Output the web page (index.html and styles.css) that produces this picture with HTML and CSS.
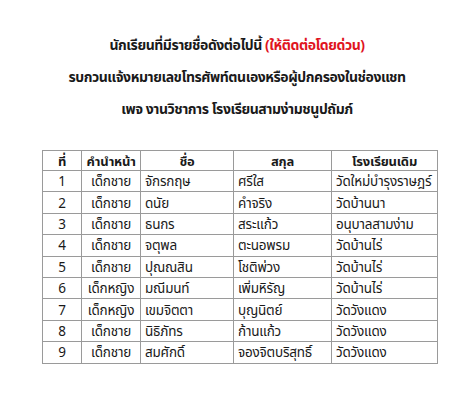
FILE: index.html
```html
<!DOCTYPE html>
<html lang="th">
<head>
<meta charset="utf-8">
<link rel="stylesheet" href="styles.css">
</head>
<body>
<div class="page">
  <div class="heading">
    <p class="line line1">นักเรียนที่มีรายชื่อดังต่อไปนี้ <span class="urgent">(ให้ติดต่อโดยด่วน)</span></p>
    <p class="line line2">รบกวนแจ้งหมายเลขโทรศัพท์ตนเองหรือผู้ปกครองในช่องแชท</p>
    <p class="line line3">เพจ งานวิชาการ โรงเรียนสามง่ามชนูปถัมภ์</p>
  </div>
  <table class="list">
    <colgroup>
      <col class="c-no"><col class="c-title"><col class="c-name"><col class="c-last"><col class="c-school">
    </colgroup>
    <thead>
      <tr><th>ที่</th><th>คำนำหน้า</th><th>ชื่อ</th><th>สกุล</th><th>โรงเรียนเดิม</th></tr>
    </thead>
    <tbody>
      <tr><td class="ctr">1</td><td class="ctr">เด็กชาย</td><td>จักรกฤษ</td><td>ศรีใส</td><td>วัดใหม่บำรุงราษฎร์</td></tr>
      <tr><td class="ctr">2</td><td class="ctr">เด็กชาย</td><td>ดนัย</td><td>คำจริง</td><td>วัดบ้านนา</td></tr>
      <tr><td class="ctr">3</td><td class="ctr">เด็กชาย</td><td>ธนกร</td><td>สระแก้ว</td><td>อนุบาลสามง่าม</td></tr>
      <tr><td class="ctr">4</td><td class="ctr">เด็กชาย</td><td>จตุพล</td><td>ตะนอพรม</td><td>วัดบ้านไร่</td></tr>
      <tr><td class="ctr">5</td><td class="ctr">เด็กชาย</td><td>ปุณณสิน</td><td>โชติพ่วง</td><td>วัดบ้านไร่</td></tr>
      <tr><td class="ctr">6</td><td class="ctr">เด็กหญิง</td><td>มณีมนท์</td><td>เพิ่มหิรัญ</td><td>วัดบ้านไร่</td></tr>
      <tr><td class="ctr">7</td><td class="ctr">เด็กหญิง</td><td>เขมจิตตา</td><td>บุญนิตย์</td><td>วัดวังแดง</td></tr>
      <tr><td class="ctr">8</td><td class="ctr">เด็กชาย</td><td>นิธิภัทร</td><td>ก้านแก้ว</td><td>วัดวังแดง</td></tr>
      <tr><td class="ctr">9</td><td class="ctr">เด็กชาย</td><td>สมศักดิ์</td><td>จองจิตบริสุทธิ์</td><td>วัดวังแดง</td></tr>
    </tbody>
  </table>
</div>
</body>
</html>
```

FILE: styles.css
```css
html, body {
  margin: 0;
  padding: 0;
  background: #ffffff;
}
body {
  font-family: "Noto Sans", "Noto Sans Thai", "Tahoma", sans-serif;
  color: #1a1a1a;
}
.page {
  width: 474px;
  height: 408px;
  padding-top: 33px;
  box-sizing: border-box;
}
.heading {
  display: flex;
  flex-direction: column;
  align-items: center;
  gap: 8px;
}
.line {
  margin: 0;
  font-weight: bold;
  font-size: 14px;
  letter-spacing: -0.45px;
  line-height: 24px;
  white-space: nowrap;
}
.urgent {
  color: #e0141e;
}
.list {
  margin: 29px 0 0 42px;
  width: 395px;
  border-collapse: collapse;
  table-layout: fixed;
  font-size: 13.5px;
  letter-spacing: -0.2px;
}
.c-no { width: 39px; }
.c-title { width: 59px; }
.c-name { width: 93px; }
.c-last { width: 98px; }
.c-school { width: 106px; }
.list th, .list td {
  border: 1px solid #9a9a9a;
  padding: 0 4px;
  white-space: nowrap;
  overflow: hidden;
  line-height: 18px;
  text-align: left;
}
.list th {
  height: 19px;
  text-align: center;
  font-weight: bold;
  font-size: 13px;
}
.list td {
  height: 20.4px;
}
.list td.ctr {
  text-align: center;
}
```
